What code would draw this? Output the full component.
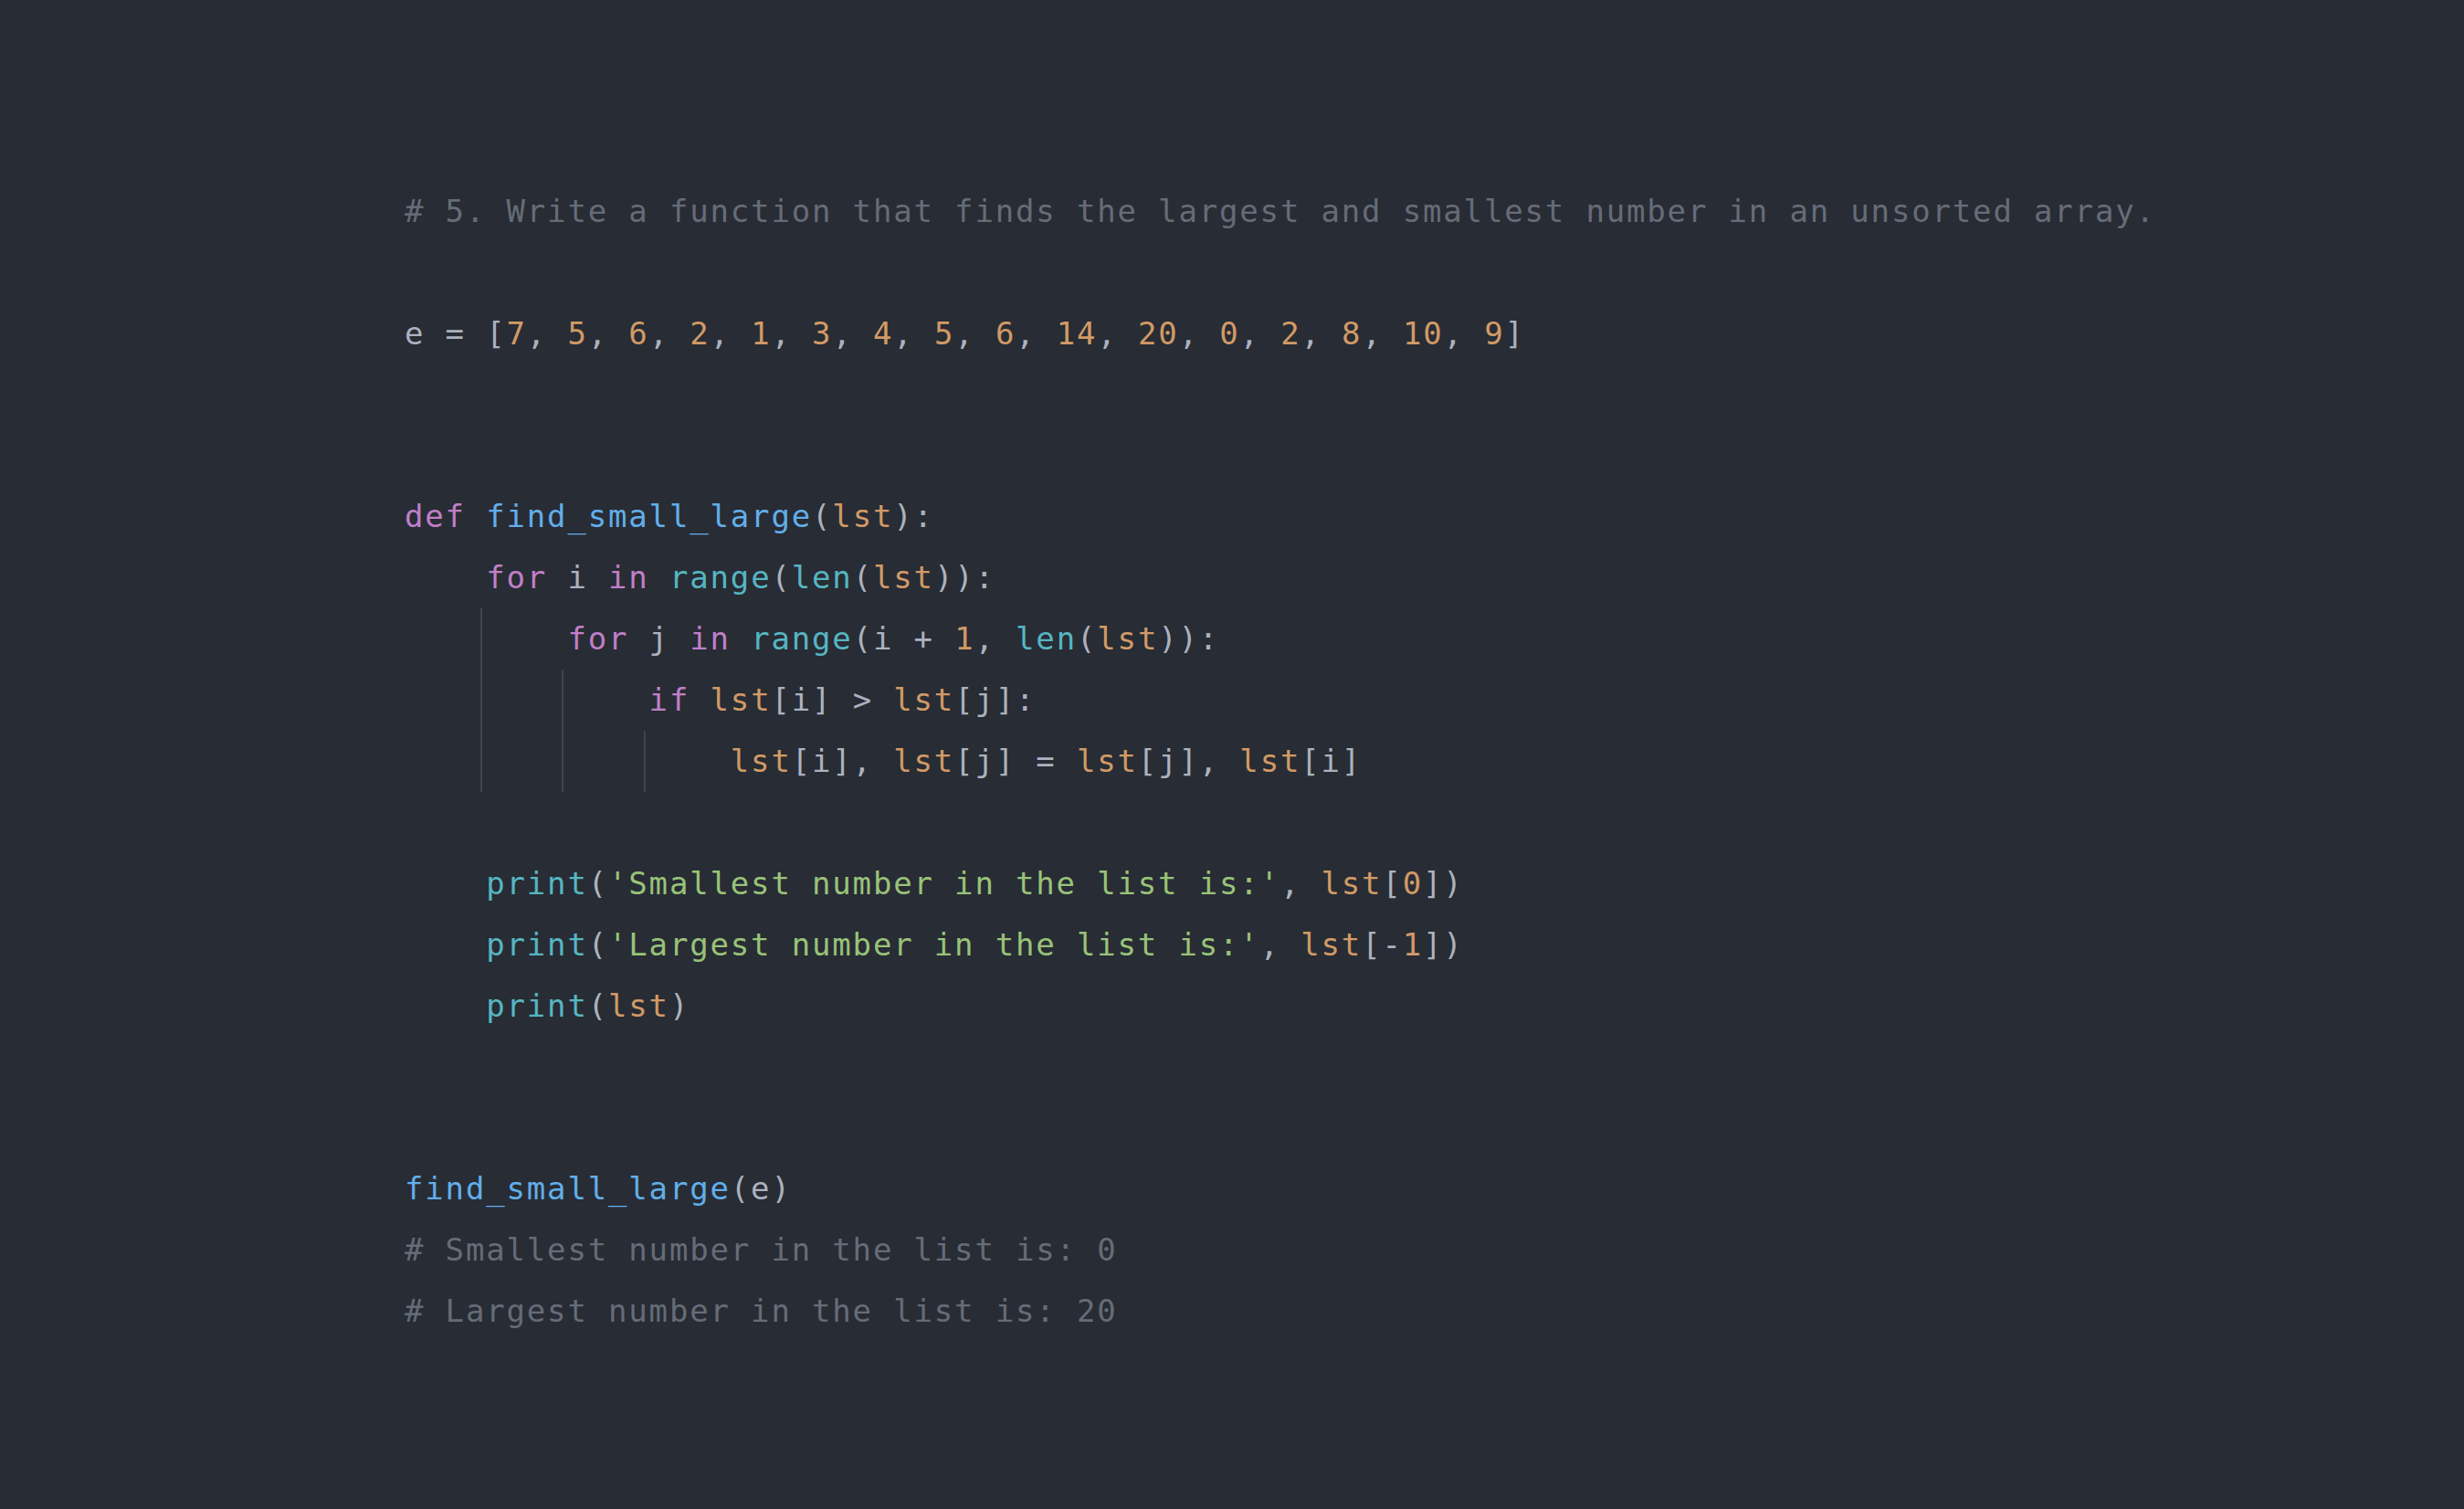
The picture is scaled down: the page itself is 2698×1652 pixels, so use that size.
import React from "react";

type Tok = [string, string];

const C = {
  p: "text-[#abb2bf]",
  c: "text-[#656c78]",
  k: "text-[#c07fc8]",
  f: "text-[#62aeea]",
  b: "text-[#56b6c2]",
  o: "text-[#d19a66]",
  s: "text-[#98c379]",
};

type Line = { indent: number; guides: number; toks: Tok[] };

const L = (indent: number, guides: number, toks: Tok[]): Line => ({ indent, guides, toks });

const lines: Line[] = [
  L(0, 0, [["c", "# 5. Write a function that finds the largest and smallest number in an unsorted array."]]),
  L(0, 0, []),
  L(0, 0, [
    ["p", "e = ["],
    ["o", "7"], ["p", ", "], ["o", "5"], ["p", ", "], ["o", "6"], ["p", ", "], ["o", "2"], ["p", ", "],
    ["o", "1"], ["p", ", "], ["o", "3"], ["p", ", "], ["o", "4"], ["p", ", "], ["o", "5"], ["p", ", "],
    ["o", "6"], ["p", ", "], ["o", "14"], ["p", ", "], ["o", "20"], ["p", ", "], ["o", "0"], ["p", ", "],
    ["o", "2"], ["p", ", "], ["o", "8"], ["p", ", "], ["o", "10"], ["p", ", "], ["o", "9"], ["p", "]"],
  ]),
  L(0, 0, []),
  L(0, 0, []),
  L(0, 0, [["k", "def"], ["p", " "], ["f", "find_small_large"], ["p", "("], ["o", "lst"], ["p", "):"]]),
  L(1, 0, [
    ["k", "for"], ["p", " i "], ["k", "in"], ["p", " "], ["b", "range"], ["p", "("], ["b", "len"],
    ["p", "("], ["o", "lst"], ["p", ")):"],
  ]),
  L(2, 1, [
    ["k", "for"], ["p", " j "], ["k", "in"], ["p", " "], ["b", "range"], ["p", "(i + "], ["o", "1"],
    ["p", ", "], ["b", "len"], ["p", "("], ["o", "lst"], ["p", ")):"],
  ]),
  L(3, 2, [["k", "if"], ["p", " "], ["o", "lst"], ["p", "[i] > "], ["o", "lst"], ["p", "[j]:"]]),
  L(4, 3, [
    ["o", "lst"], ["p", "[i], "], ["o", "lst"], ["p", "[j] = "], ["o", "lst"], ["p", "[j], "],
    ["o", "lst"], ["p", "[i]"],
  ]),
  L(0, 0, []),
  L(1, 0, [
    ["b", "print"], ["p", "("], ["s", "'Smallest number in the list is:'"], ["p", ", "], ["o", "lst"],
    ["p", "["], ["o", "0"], ["p", "])"],
  ]),
  L(1, 0, [
    ["b", "print"], ["p", "("], ["s", "'Largest number in the list is:'"], ["p", ", "], ["o", "lst"],
    ["p", "[-"], ["o", "1"], ["p", "])"],
  ]),
  L(1, 0, [["b", "print"], ["p", "("], ["o", "lst"], ["p", ")"]]),
  L(0, 0, []),
  L(0, 0, []),
  L(0, 0, [["f", "find_small_large"], ["p", "(e)"]]),
  L(0, 0, [["c", "# Smallest number in the list is: 0"]]),
  L(0, 0, [["c", "# Largest number in the list is: 20"]]),
];

function CodeLine({ line }: { line: Line }) {
  const groups: React.ReactNode[] = [];
  for (let g = 0; g < line.indent; g++) {
    const guided = g >= 1 && g <= line.guides;
    groups.push(
      <span
        key={"i" + g}
        className={
          guided
            ? "inline-block h-[66.9px] align-top relative -left-[6px] shadow-[inset_2px_0_0_#3f444e]"
            : "inline-block h-[66.9px] align-top"
        }
      >
        {"    "}
      </span>
    );
  }
  return (
    <div className="h-[66.9px] leading-[66.9px] whitespace-pre">
      {groups}
      {line.toks.map((t, i) => (
        <span key={i} className={C[t[0] as keyof typeof C]}>
          {t[1]}
        </span>
      ))}
      {line.toks.length === 0 && line.indent === 0 ? " " : null}
    </div>
  );
}

export default function App() {
  return (
    <div className="min-h-screen w-full bg-[#282c34] pt-[198px] pl-[443px] font-['DejaVu_Sans_Mono',monospace] text-[34px] tracking-[1.83px] text-[#abb2bf]">
      {lines.map((l, i) => (
        <CodeLine key={i} line={l} />
      ))}
    </div>
  );
}
